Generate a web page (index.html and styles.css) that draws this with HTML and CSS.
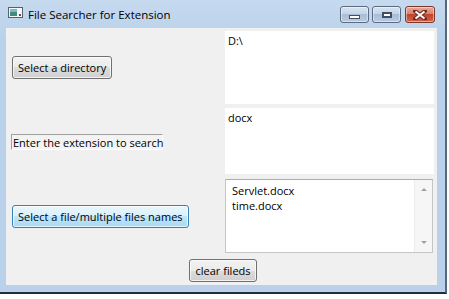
FILE: index.html
```html
<!DOCTYPE html>
<html lang="en">
<head>
  <meta charset="UTF-8" />
  <title>File Searcher for Extension</title>
  <link rel="stylesheet" href="styles.css">
</head>
<body>
  <div class="window">
    <div class="titlebar">
      <svg class="app-icon" width="15" height="11" viewBox="0 0 15 11">
        <rect x="0.5" y="0.5" width="14" height="10" fill="#f4f6f8" stroke="#55606b"/>
        <rect x="2" y="2" width="7" height="7" fill="#3f8a7c"/>
        <rect x="2" y="2" width="7" height="3" fill="#7fb7c4"/>
        <rect x="11" y="7" width="2" height="2" fill="#4a5560"/>
      </svg>
      <span class="title">File Searcher for Extension</span>
      <div class="caption-buttons">
        <span class="cap cap-min"><i></i></span>
        <span class="cap cap-max"><i></i></span>
        <span class="cap cap-close">
          <svg width="14" height="10" viewBox="0 0 14 10">
            <path d="M2 1 L12 9 M12 1 L2 9" stroke="#6e2a1f" stroke-width="4" stroke-linecap="square"/>
            <path d="M2.5 1.5 L11.5 8.5 M11.5 1.5 L2.5 8.5" stroke="#fff" stroke-width="2"/>
          </svg>
        </span>
      </div>
    </div>

    <div class="client">
      <div class="cell">
        <button class="btn">Select a directory</button>
      </div>
      <div class="cell-right">
        <div class="field field-dir">D:\</div>
      </div>

      <div class="cell">
        <span class="label-field">Enter the extension to search</span>
      </div>
      <div class="cell-right">
        <div class="field field-ext">docx</div>
      </div>

      <div class="cell">
        <button class="btn btn-focus">Select a file/multiple files names</button>
      </div>
      <div class="cell-right">
        <div class="listbox">
          <div class="list-items">
            <div>Servlet.docx</div>
            <div>time.docx</div>
          </div>
          <div class="vscroll">
            <span class="arrow-up"></span>
            <span class="arrow-down"></span>
          </div>
        </div>
      </div>

      <div class="bottom-row">
        <button class="btn">clear fileds</button>
      </div>
    </div>
  </div>
</body>
</html>
```

FILE: styles.css
```css
body {
  margin: 0;
  background-color: #ffffff;
  font-family: "Open Sans", "Liberation Sans", sans-serif;
  font-size: 11px;
  color: #000;
}
.window {
  width: 447px;
  height: 294px;
  padding: 0 8px 0 6px;
  box-sizing: border-box;
  background: linear-gradient(#c6daef, #b9d1ea 40px, #b9d1ea);
  border-right: 2px solid #56687c;
  border-bottom: 2px solid #1f2f3a;
  display: flex;
  flex-direction: column;
}
.titlebar {
  height: 28px;
  display: flex;
  align-items: flex-start;
  flex-shrink: 0;
}
.app-icon {
  margin: 7px 0 0 2px;
}
.title {
  margin: 7px 0 0 5px;
  font-size: 11.5px;
  line-height: 15px;
}
.caption-buttons {
  margin: 6px 2px 0 auto;
  display: flex;
  gap: 3px;
}
.cap {
  height: 15px;
  border: 1px solid #5b6b82;
  border-radius: 3px;
  display: flex;
  align-items: center;
  justify-content: center;
  box-shadow: inset 0 0 0 1px rgba(255, 255, 255, 0.45);
}
.cap-min, .cap-max {
  width: 27px;
  background: linear-gradient(#d9e4f1, #c3d3e6 50%, #aabdd6 50%, #b9cbe0);
}
.cap-close {
  width: 28px;
  margin-left: 1px;
  background: linear-gradient(#e9a99b, #d47e6a 50%, #c1442d 50%, #d0644a);
  border-color: #7d3a2c;
}
.cap-min i {
  width: 9px;
  height: 2px;
  margin-top: 5px;
  background: #fff;
  border: 1px solid #3f4f66;
}
.cap-max i {
  width: 8px;
  height: 4px;
  background: #fff;
  border: 1px solid #3f4f66;
  box-shadow: inset 0 0 0 1px #3f4f66, inset 0 0 0 2px #fff;
}
.client {
  flex: 1;
  background-color: #f0f0f0;
  padding: 3px 5px 0 6px;
  display: grid;
  grid-template-columns: 213px 209px;
  grid-template-rows: 73px 67px 74px auto;
  row-gap: 4px;
  margin-bottom: 7px;
}
.cell {
  display: flex;
  align-items: center;
}
.cell-right {
  display: flex;
  align-items: flex-start;
}
.btn {
  font-family: inherit;
  font-size: 11px;
  height: 23px;
  padding: 0 5px;
  color: #000;
  border: 1px solid #707070;
  border-radius: 3px;
  background: linear-gradient(#f2f2f2, #ebebeb 50%, #dddddd 50%, #cfcfcf);
  box-shadow: inset 0 0 0 1px rgba(255, 255, 255, 0.7);
}
.btn-focus {
  border-color: #3c7fb1;
  background: linear-gradient(#eaf6fd, #d9f0fc 50%, #bee6fd 50%, #a7d9f5);
}
.label-field {
  width: 152px;
  height: 16px;
  line-height: 15px;
  padding-left: 1px;
  margin-left: -1px;
  box-sizing: border-box;
  border-top: 1px solid #a0a0a0;
  border-left: 1px solid #a0a0a0;
  border-right: 1px solid #ffffff;
  border-bottom: 1px solid #ffffff;
  background-color: #f3f3f3;
  white-space: nowrap;
}
.field {
  width: 209px;
  background-color: #fff;
  padding: 2px 3px;
  box-sizing: border-box;
  line-height: 15px;
}
.field-dir {
  height: 73px;
}
.field-ext {
  height: 66px;
}
.listbox {
  width: 208px;
  height: 74px;
  box-sizing: border-box;
  background-color: #fff;
  border: 1px solid #c5c5c5;
  border-top-color: #abadb3;
  display: flex;
}
.list-items {
  flex: 1;
  padding: 3px 6px;
  line-height: 15px;
}
.vscroll {
  width: 17px;
  background-color: #f6f6f6;
  border-left: 1px solid #ececec;
  display: flex;
  flex-direction: column;
  align-items: center;
  justify-content: space-between;
  padding: 8px 0 8px;
}
.arrow-up {
  width: 0;
  height: 0;
  border-left: 3px solid transparent;
  border-right: 3px solid transparent;
  border-bottom: 3px solid #a3a3a3;
}
.arrow-down {
  width: 0;
  height: 0;
  border-left: 3px solid transparent;
  border-right: 3px solid transparent;
  border-top: 3px solid #a3a3a3;
}
.bottom-row {
  grid-column: 1 / 3;
  display: flex;
  justify-content: center;
  padding-top: 2px;
}
```
